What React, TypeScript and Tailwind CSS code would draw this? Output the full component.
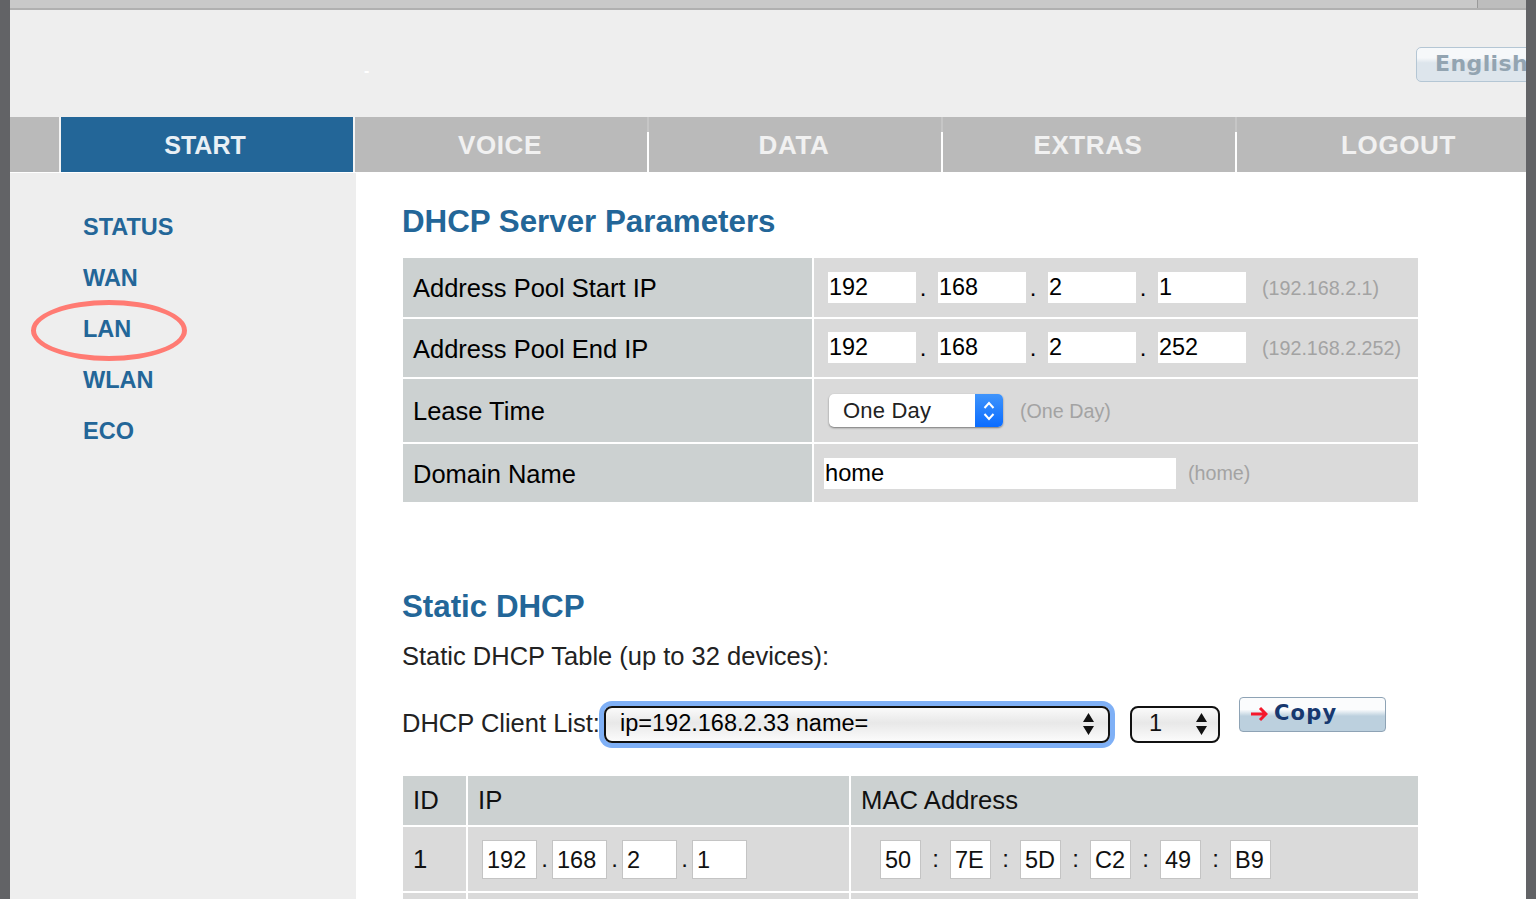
import React from 'react';

const font = { fontFamily: '"Liberation Sans", Arial, sans-serif' };

const tabs = [
  { name: 'START', width: 'w-[292px]', active: true },
  { name: 'VOICE', width: 'w-[292px]' },
  { name: 'DATA', width: 'w-[292px]' },
  { name: 'EXTRAS', width: 'w-[292px]' },
  { name: 'LOGOUT', width: 'w-[325px]' },
];

const sideLinks = ['STATUS', 'WAN', 'LAN', 'WLAN', 'ECO'];

// small up/down arrows on the black-outlined selects
const SelectArrows = () => (
  <svg width="13" height="24" viewBox="0 0 13 24" className="shrink-0">
    <path d="M6.5 1 L12 10 H1 Z M6.5 23 L1 14 H12 Z" fill="#111" />
  </svg>
);

const IpRow = ({ parts }: { parts: string[] }) => (
  <div className="flex items-center mb-[1px]">
    {parts.map((p, i) => (
      <React.Fragment key={i}>
        <div className="w-[88px] h-[31px] bg-white pl-[1px] text-[23.4px] leading-[31px] text-black">{p}</div>
        {i < 3 && <span className="w-[14px] mr-[8px] text-center text-[24px] leading-[31px] text-black">.</span>}
      </React.Fragment>
    ))}
  </div>
);

const Hint = ({ children }: { children: React.ReactNode }) => (
  <span className="pt-[2px] text-[19.7px] text-[#a3a3a3]">{children}</span>
);

const ParamRow = ({ label, height, children }: { label: string; height: string; children: React.ReactNode }) => (
  <div className={`flex gap-[2px] ${height}`}>
    <div className="w-[409px] bg-[#ccd1d1] pl-[10px] pt-[2px] flex items-center text-[25.5px] text-black">{label}</div>
    <div className="flex-1 bg-[#dadada] flex items-center">{children}</div>
  </div>
);

const SmallBox = ({ value, width = 'w-[55px]' }: { value: string; width?: string }) => (
  <div className={`${width} h-[39px] bg-white border border-[#c4c4c4] pl-[4px] text-[23.5px] leading-[39px] text-[#111]`}>{value}</div>
);

export default function App() {
  return (
    <div className="w-[1536px] h-[899px] overflow-hidden flex bg-[#626366]" style={font}>
      <div className="w-[10px] shrink-0" />
      <div className="w-[1516px] shrink-0 flex flex-col overflow-hidden">
        {/* top strip */}
        <div className="h-[10px] shrink-0 flex bg-[#b0b0b0] pb-[2px]">
          <div className="w-[1467px] bg-[#c9c9c9]" />
          <div className="w-[1px] bg-[#9a9a9a]" />
          <div className="flex-1 bg-[#bdbdbd]" />
        </div>

        {/* header */}
        <div className="h-[107px] shrink-0 bg-[#eeeeee] pt-[37px] pl-[1406px] relative">
          <span className="absolute left-[354px] top-[53px] text-[16px] leading-[16px] font-bold text-white">-</span>
          <div className="w-[140px] h-[35px] rounded-[5px] border border-[#b4c6d4] bg-[linear-gradient(#f6f8fa_0%,#f6f8fa_30%,#dde5ec_45%,#dde5ec_100%)] pl-[18px] text-[22px] leading-[32px] font-bold tracking-[0.4px] text-[#93a4b1]" style={{ fontFamily: '"DejaVu Sans", sans-serif' }}>
            English
          </div>
        </div>

        {/* tabs */}
        <div className="h-[56px] shrink-0 flex bg-white pb-px">
          <div className="w-[49px] shrink-0 bg-[#bababa]" />
          {tabs.map((t, i) => (
            <React.Fragment key={t.name}>
              <div className={`w-[2px] shrink-0 ${i < 2 ? 'bg-[#f4f4f4]' : 'bg-[linear-gradient(#c6c6c6_0,#c6c6c6_15px,#ffffff_15px)]'}`} />
              <div
                className={`${t.width} shrink-0 flex items-center justify-center pt-[2px] font-bold ${t.active ? 'pr-[4px] text-[25px] bg-[#236698] text-white/90' : 'pr-[2px] text-[26px] tracking-[0.6px] bg-[#bababa] text-white/80'}`}
              >
                {t.name}
              </div>
            </React.Fragment>
          ))}
        </div>

        <div className="flex-1 flex min-h-0">
          {/* sidebar */}
          <div className="w-[346px] shrink-0 bg-[#eeeeee] pl-[73px] pt-[29px] relative">
            {sideLinks.map((l) => (
              <div key={l} className="h-[51px] text-[23.5px] leading-[51px] font-bold text-[#236698]">{l}</div>
            ))}
            {/* red marker around LAN */}
            <div className="absolute left-[21px] top-[127px] w-[156px] h-[61px] rounded-[50%] border-[5px] border-[#ff7b73]" />
          </div>

          {/* main */}
          <div className="flex-1 bg-white pl-[47px] pt-[29px]">
            <h2 className="-ml-[1px] text-[31.3px] leading-[40px] font-bold text-[#236698] mb-[16px]">DHCP Server Parameters</h2>

            <div className="w-[1015px] flex flex-col gap-[2px]">
              <ParamRow label="Address Pool Start IP" height="h-[59px]">
                <div className="ml-[14px]"><IpRow parts={['192', '168', '2', '1']} /></div>
                <Hint><span className="ml-[16px]">(192.168.2.1)</span></Hint>
              </ParamRow>
              <ParamRow label="Address Pool End IP" height="h-[58px]">
                <div className="ml-[14px]"><IpRow parts={['192', '168', '2', '252']} /></div>
                <Hint><span className="ml-[16px]">(192.168.2.252)</span></Hint>
              </ParamRow>
              <ParamRow label="Lease Time" height="h-[63px]">
                <div className="ml-[15px] w-[174px] h-[33px] rounded-[5px] bg-white shadow-[0_1px_2px_rgba(0,0,0,0.45)] flex overflow-hidden">
                  <div className="flex-1 pl-[14px] text-[22px] tracking-[0.2px] leading-[33px] text-[#222]">One Day</div>
                  <div className="w-[28px] bg-[linear-gradient(#3f94fb,#0a6cff)] flex items-center justify-center">
                    <svg width="14" height="24" viewBox="0 0 14 24" fill="none" stroke="#fff" strokeWidth="2">
                      <path d="M2.5 9 L7 4 L11.5 9 M2.5 15 L7 20 L11.5 15" />
                    </svg>
                  </div>
                </div>
                <Hint><span className="ml-[17px]">(One Day)</span></Hint>
              </ParamRow>
              <ParamRow label="Domain Name" height="h-[58px]">
                <div className="ml-[10px] w-[352px] h-[31px] bg-white pl-[1px] text-[23.7px] leading-[31px] text-black">home</div>
                <Hint><span className="ml-[12px]">(home)</span></Hint>
              </ParamRow>
            </div>

            <h2 className="-ml-[1px] mt-[85px] text-[31.3px] leading-[40px] font-bold text-[#236698]">Static DHCP</h2>
            <p className="-ml-[1px] mt-[14px] text-[25.5px] leading-[30px] text-[#222]">Static DHCP Table (up to 32 devices):</p>

            {/* client list */}
            <div className="mt-[28px] h-[50px] flex items-center">
              <span className="-ml-[1px] pb-[2px] text-[25.5px] text-[#222] w-[202px] shrink-0">DHCP Client List:</span>
              <div className="w-[506px] h-[37px] rounded-[8px] border-2 border-[#111] shadow-[0_0_0_5px_#7fb0f6] bg-[linear-gradient(#fafafa,#e8e8e8_45%,#fbfbfb)] flex items-center pl-[14px] pr-[13px] text-[23.5px] text-black justify-between">
                <span>ip=192.168.2.33 name=</span>
                <SelectArrows />
              </div>
              <div className="ml-[20px] w-[90px] h-[37px] rounded-[8px] border-2 border-[#111] bg-[linear-gradient(#fafafa,#e8e8e8_45%,#fbfbfb)] flex items-center pl-[17px] pr-[10px] text-[23.5px] text-[#111] justify-between">
                <span>1</span>
                <SelectArrows />
              </div>
              <div className="ml-[19px] -mt-[20px] w-[147px] h-[35px] rounded-[4px] border border-[#8ea3b5] bg-[linear-gradient(#fbfcfd_0%,#fbfcfd_35%,#bcd0de_55%,#bcd0de_100%)] flex items-center pl-[10px] gap-[6px]">
                <svg width="18" height="16" viewBox="0 0 18 16" fill="none" stroke="#f5182c" strokeWidth="3">
                  <path d="M1 8 H16 M10 2 L16 8 L10 14" />
                </svg>
                <span className="text-[21px] font-bold tracking-[1.2px] text-[#17386f]" style={{ fontFamily: '"DejaVu Sans", sans-serif' }}>Copy</span>
              </div>
            </div>

            {/* static table */}
            <div className="mt-[27px] w-[1015px] flex flex-col gap-[2px]">
              <div className="flex gap-[2px] h-[49px] text-[25.7px] text-[#111]">
                <div className="w-[63px] bg-[#ccd1d1] pl-[10px] flex items-center">ID</div>
                <div className="w-[381px] bg-[#ccd1d1] pl-[10px] flex items-center">IP</div>
                <div className="flex-1 bg-[#ccd1d1] pl-[10px] flex items-center">MAC Address</div>
              </div>
              <div className="flex gap-[2px] h-[64px] text-[25.7px] text-[#111]">
                <div className="w-[63px] bg-[#dadada] pl-[10px] flex items-center">1</div>
                <div className="w-[381px] bg-[#dadada] pl-[14px] flex items-center">
                  {['192', '168', '2', '1'].map((v, i) => (
                    <React.Fragment key={i}>
                      <SmallBox value={v} />
                      {i < 3 && <span className="w-[15px] text-center text-[24px]">.</span>}
                    </React.Fragment>
                  ))}
                </div>
                <div className="flex-1 bg-[#dadada] pl-[29px] flex items-center">
                  {['50', '7E', '5D', 'C2', '49', 'B9'].map((v, i) => (
                    <React.Fragment key={i}>
                      <SmallBox value={v} width="w-[41px]" />
                      {i < 5 && <span className="w-[29px] text-center text-[24px]">:</span>}
                    </React.Fragment>
                  ))}
                </div>
              </div>
              <div className="flex gap-[2px] h-[64px]">
                <div className="w-[63px] bg-[#dadada]" />
                <div className="w-[381px] bg-[#dadada]" />
                <div className="flex-1 bg-[#dadada]" />
              </div>
            </div>
          </div>
        </div>
      </div>
      <div className="flex-1" />
    </div>
  );
}
